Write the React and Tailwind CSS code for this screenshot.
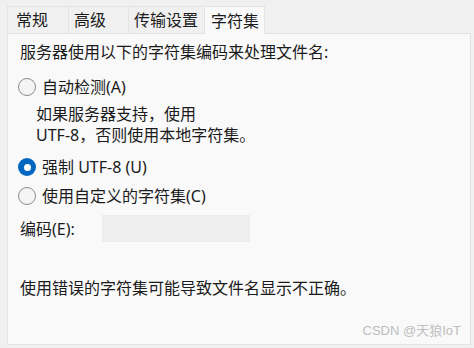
import * as React from "react";

const TABS = [
  { label: "常规", w: "w-[61px]", pl: "pl-[8px]" },
  { label: "高级", w: "w-[60px]", pl: "pl-[5px]" },
  { label: "传输设置", w: "w-[76px]", pl: "pl-[5px]" },
  { label: "字符集", w: "w-[61px]", pl: "pl-[6px]", active: true },
];

function Radio({ checked, label }) {
  return (
    <div className="flex items-center h-[22px]">
      {checked ? (
        <span className="w-[18px] h-[18px] rounded-full bg-[#0067c0] flex items-center justify-center ml-[10px]">
          <span className="w-[7px] h-[7px] rounded-full bg-white" />
        </span>
      ) : (
        <span className="w-[18px] h-[18px] rounded-full border border-[#8b8b8b] bg-[#f5f5f5] ml-[10px]" />
      )}
      <span className="ml-[6px]">{label}</span>
    </div>
  );
}

export default function App() {
  return (
    <div
      className="relative w-[474px] h-[348px] bg-[#f0f0f0] pl-[7px] pt-[6px] pr-[3px] flex flex-col text-[16px] text-[#1b1b1b] overflow-hidden"
      style={{ fontFamily: '"Noto Sans", "Noto Sans CJK SC", sans-serif' }}
    >
      <div className="flex h-[27px] items-end">
        {TABS.map((t) => (
          <div
            key={t.label}
            className={
              t.active
                ? `${t.w} ${t.pl} h-[28px] -mb-px bg-[#f9f9f9] border border-b-0 border-[#e3e3e3] leading-[28px] relative z-10`
                : `${t.w} ${t.pl} h-[27px] bg-[#f0f0f0] border-t border-l border-[#e3e3e3] leading-[26px]`
            }
          >
            {t.label}
          </div>
        ))}
      </div>
      <div className="flex-1 bg-[#f9f9f9] border border-[#e3e3e3] mb-[3px] pl-[12px] pt-[7px] flex flex-col">
        <div className="leading-[22px]">服务器使用以下的字符集编码来处理文件名:</div>
        <div className="mt-[13px] -ml-[12px]">
          <Radio label="自动检测(A)" />
        </div>
        <div className="mt-[6px] ml-[16px] leading-[21px]">
          <div>如果服务器支持，使用</div>
          <div>UTF-8，否则使用本地字符集。</div>
        </div>
        <div className="mt-[10px] -ml-[12px]">
          <Radio checked label="强制 UTF-8 (U)" />
        </div>
        <div className="mt-[7px] -ml-[12px]">
          <Radio label="使用自定义的字符集(C)" />
        </div>
        <div className="mt-[8px] flex items-center h-[27px]">
          <span className="w-[82px]">编码(E):</span>
          <div className="w-[148px] h-[27px] bg-[#efefef] border border-[#ececec]" />
        </div>
        <div className="mt-[35px] leading-[22px]">使用错误的字符集可能导致文件名显示不正确。</div>
      </div>
      <div
        className="absolute right-[13px] bottom-[8px] text-[13px] text-[#bdbdbd] leading-[18px]"
        style={{ fontFamily: '"Liberation Sans", "Noto Sans CJK SC", sans-serif' }}
      >
        CSDN @天狼IoT
      </div>
    </div>
  );
}
